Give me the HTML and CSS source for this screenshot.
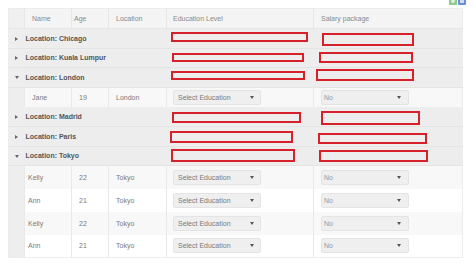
FILE: index.html
```html
<!DOCTYPE html>
<html>
<head>
<meta charset="utf-8">
<link rel="stylesheet" href="styles.css">
</head>
<body>
<div class="toolbar">
  <span class="tool tool-green"></span>
  <span class="tool tool-blue"></span>
</div>
<table class="grid">
  <colgroup>
    <col class="c-exp"><col class="c-name"><col class="c-age"><col class="c-loc"><col class="c-edu"><col class="c-sal">
  </colgroup>
  <thead>
    <tr class="head">
      <th class="exp"></th>
      <th>Name</th>
      <th class="h-age">Age</th>
      <th>Location</th>
      <th class="h-edu">Education Level</th>
      <th>Salary package</th>
    </tr>
  </thead>
  <tbody>
    <tr class="group"><td class="exp"><span class="tri closed"></span></td><td colspan="3">Location: Chicago</td><td></td><td></td></tr>
    <tr class="group"><td class="exp"><span class="tri closed"></span></td><td colspan="3">Location: Kuala Lumpur</td><td></td><td></td></tr>
    <tr class="group"><td class="exp"><span class="tri open"></span></td><td colspan="3">Location: London</td><td></td><td></td></tr>
    <tr class="row row-alt short">
      <td class="exp"></td><td class="name wide">Jane</td><td>19</td><td>London</td>
      <td><div class="select edu"><span>Select Education</span><span class="arrow"></span></div></td>
      <td><div class="select sal"><span>No</span><span class="arrow"></span></div></td>
    </tr>
    <tr class="group"><td class="exp"><span class="tri closed"></span></td><td colspan="3">Location: Madrid</td><td></td><td></td></tr>
    <tr class="group"><td class="exp"><span class="tri closed"></span></td><td colspan="3">Location: Paris</td><td></td><td></td></tr>
    <tr class="group"><td class="exp"><span class="tri open"></span></td><td colspan="3">Location: Tokyo</td><td></td><td></td></tr>
    <tr class="row row-alt">
      <td class="exp"></td><td class="name">Kelly</td><td>22</td><td>Tokyo</td>
      <td><div class="select edu"><span>Select Education</span><span class="arrow"></span></div></td>
      <td><div class="select sal"><span>No</span><span class="arrow"></span></div></td>
    </tr>
    <tr class="row">
      <td class="exp"></td><td class="name">Ann</td><td>21</td><td>Tokyo</td>
      <td><div class="select edu"><span>Select Education</span><span class="arrow"></span></div></td>
      <td><div class="select sal"><span>No</span><span class="arrow"></span></div></td>
    </tr>
    <tr class="row row-alt">
      <td class="exp"></td><td class="name">Kelly</td><td>22</td><td>Tokyo</td>
      <td><div class="select edu"><span>Select Education</span><span class="arrow"></span></div></td>
      <td><div class="select sal"><span>No</span><span class="arrow"></span></div></td>
    </tr>
    <tr class="row">
      <td class="exp"></td><td class="name">Ann</td><td>21</td><td>Tokyo</td>
      <td><div class="select edu"><span>Select Education</span><span class="arrow"></span></div></td>
      <td><div class="select sal"><span>No</span><span class="arrow"></span></div></td>
    </tr>
  </tbody>
</table>
<div class="marks">
  <span class="mark m1"></span><span class="mark m2"></span>
  <span class="mark m3"></span><span class="mark m4"></span>
  <span class="mark m5"></span><span class="mark m6"></span>
  <span class="mark m7"></span><span class="mark m8"></span>
  <span class="mark m9"></span><span class="mark m10"></span>
  <span class="mark m11"></span><span class="mark m12"></span>
</div>
</body>
</html>
```

FILE: styles.css
```css
html, body {
  background: #ffffff;
}
body {
  margin: 8px;
  font-family: "Liberation Sans", Arial, sans-serif;
  font-size: 7px;
  color: #777;
}
.toolbar {
  position: absolute;
  top: -3px;
  left: 449px;
  display: flex;
  gap: 1px;
}
.tool {
  display: block;
  width: 8px;
  height: 8px;
  border-radius: 1px;
  position: relative;
}
.tool-green { background: #8cc98c; }
.tool-blue { background: #6a8ed8; }
.tool::after {
  content: "";
  position: absolute;
  left: 2px;
  top: 2px;
  width: 4px;
  height: 4px;
  border-radius: 50%;
  background: rgba(255,255,255,0.7);
}
.tool-blue::after { border-radius: 0; }

.grid {
  width: 454px;
  table-layout: fixed;
  border-collapse: collapse;
  border: 1px solid #ececec;
}
.c-exp { width: 16px; }
.c-name { width: 47px; }
.c-age { width: 37px; }
.c-loc { width: 58px; }
.c-edu { width: 147px; }
.c-sal { width: 149px; }

th, td {
  padding: 0 0 0 7px;
  text-align: left;
  vertical-align: middle;
  white-space: nowrap;
  overflow: visible;
}
.head { height: 20px; background: #f4f4f4; }
.head th {
  font-weight: normal;
  color: #8a8a8a;
  border-left: 1px solid #e6e6e6;
  border-bottom: 1px solid #e6e6e6;
}
.head th.exp { border-left: none; background: #f0f0f0; }
.head th.h-age { padding-left: 2px; }
.head th.h-edu { padding-left: 6px; }

td.exp { padding: 0; text-align: center; background: #eeeeee; }

.group { height: 19.5px; background: #ededed; }
.group td {
  font-weight: bold;
  color: #555;
  padding-left: 1px;
  border-bottom: 1px solid #e4e4e4;
}
.group td.exp { padding: 0; }
.tri {
  display: inline-block;
  width: 0;
  height: 0;
  vertical-align: middle;
}
.tri.closed {
  border-top: 2px solid transparent;
  border-bottom: 2px solid transparent;
  border-left: 3px solid #666;
}
.tri.open {
  border-left: 2px solid transparent;
  border-right: 2px solid transparent;
  border-top: 3px solid #666;
}

.row { height: 23px; background: #ffffff; }
.row.short { height: 20px; }
.row-alt { background: #f8f8f8; }
.row td {
  border-left: 1px solid #e8e8e8;
  color: #7a7a7a;
}
.row td.exp { border-left: none; border-right: 1px solid #e8e8e8; }
.row td.name { padding-left: 3px; }
.row td.name.wide { padding-left: 7px; }
.row td:nth-child(5) { padding-left: 6px; }
.row td:nth-child(6) { padding-left: 7px; }

.select {
  box-sizing: border-box;
  width: 88px;
  height: 15px;
  background: #efefef;
  border: 1px solid #e4e4e4;
  border-radius: 2px;
  display: flex;
  align-items: center;
  justify-content: space-between;
  padding: 0 6px 0 4px;
  color: #7a7a7a;
}
.select.sal { padding-left: 2px; padding-right: 7px; color: #999; }
.arrow {
  width: 0;
  height: 0;
  border-left: 2px solid transparent;
  border-right: 2px solid transparent;
  border-top: 3px solid #555;
}

.marks { position: absolute; top: 0; left: 0; }
.mark {
  position: absolute;
  box-sizing: border-box;
  border: 2px solid #d6212b;
}
.m1 { left: 171px; top: 32px; width: 137px; height: 10px; }
.m2 { left: 322px; top: 33px; width: 92px; height: 13px; }
.m3 { left: 172px; top: 53px; width: 132px; height: 9px; }
.m4 { left: 319px; top: 52px; width: 94px; height: 11px; }
.m5 { left: 171px; top: 71px; width: 134px; height: 9px; }
.m6 { left: 316px; top: 69px; width: 98px; height: 12px; }
.m7 { left: 172px; top: 112px; width: 129px; height: 11px; }
.m8 { left: 321px; top: 111px; width: 99px; height: 14px; }
.m9 { left: 170px; top: 131px; width: 123px; height: 12px; }
.m10 { left: 318px; top: 133px; width: 109px; height: 11px; }
.m11 { left: 171px; top: 149px; width: 124px; height: 13px; }
.m12 { left: 319px; top: 150px; width: 109px; height: 12px; }
```
